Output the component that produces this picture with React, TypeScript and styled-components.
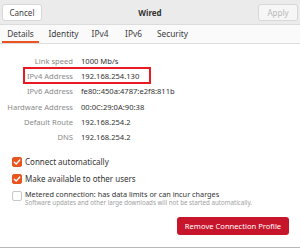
import React from "react";
import styled, { createGlobalStyle } from "styled-components";

const Global = createGlobalStyle`
  html, body { margin: 0; padding: 0; background: #ffffff; }
  body { font-family: "Noto Sans", "DejaVu Sans", sans-serif; }
  * { box-sizing: border-box; }
`;

const Window = styled.div`
  position: relative;
  width: 300px;
  height: 248px;
  display: flex;
  flex-direction: column;
  background: #ffffff;
  overflow: hidden;
  border-bottom: 1px solid #b8b8b8;
`;

const Header = styled.div`
  height: 25px;
  flex: none;
  display: grid;
  grid-template-columns: 1fr auto 1fr;
  align-items: center;
  padding: 0 2px;
  background: #ebebeb;
  border-bottom: 1px solid #dcdcdc;
`;

const HeadButton = styled.button<{ $disabled?: boolean }>`
  width: 40px;
  height: 17px;
  padding: 0;
  border: 1px solid #d8d8d8;
  border-radius: 3px;
  background: ${(p) => (p.$disabled ? "#f6f6f6" : "#ffffff")};
  color: ${(p) => (p.$disabled ? "#b8b8b8" : "#3d3d3d")};
  font-family: inherit;
  font-size: 8px;
  justify-self: ${(p) => (p.$disabled ? "end" : "start")};
`;

const Title = styled.div`
  font-size: 8px;
  font-weight: 700;
  color: #333333;
`;

const Tabs = styled.div`
  height: 19px;
  flex: none;
  display: flex;
  padding-left: 2px;
  background: #fafafa;
  border-bottom: 1px solid #dedede;
`;

const Tab = styled.div<{ $active?: boolean; $w: number }>`
  width: ${(p) => p.$w}px;
  display: flex;
  align-items: center;
  justify-content: center;
  padding-top: 1px;
  font-size: 8.3px;
  color: #3d3d3d;
  border-bottom: 2px solid ${(p) => (p.$active ? "#e95420" : "transparent")};
`;

const Content = styled.div`
  flex: 1;
  display: flex;
  flex-direction: column;
  padding-top: 9px;
`;

const Details = styled.div`
  display: grid;
  grid-template-columns: 73px auto;
  column-gap: 8px;
  grid-auto-rows: 15.3px;
  align-items: center;
  font-size: 7.6px;
`;

const Label = styled.div`
  text-align: right;
  color: #8a8a8a;
  white-space: nowrap;
`;

const Value = styled.div`
  color: #333333;
  white-space: nowrap;
`;

const RedBox = styled.div`
  position: absolute;
  left: 23px;
  top: 67px;
  width: 128px;
  height: 17px;
  border: 2px solid #ea1a22;
  pointer-events: none;
`;

const Checks = styled.div`
  display: flex;
  flex-direction: column;
  gap: 7px;
  padding-left: 12px;
  margin-top: 12px;
`;

const CheckRow = styled.div<{ $shift?: number }>`
  display: flex;
  align-items: flex-start;
  gap: 3px;
  margin-top: ${(p) => p.$shift ?? 0}px;
`;

const Box = styled.div<{ $checked?: boolean }>`
  width: 10px;
  height: 10px;
  flex: none;
  border-radius: 2px;
  margin-top: ${(p) => (p.$checked ? "0" : "2px")};
  background: ${(p) => (p.$checked ? "#e95420" : "#ffffff")};
  border: 1px solid ${(p) => (p.$checked ? "#e95420" : "#c8c8c8")};
  display: flex;
  align-items: center;
  justify-content: center;
`;

const CheckText = styled.div<{ $size?: number }>`
  display: flex;
  flex-direction: column;
  font-size: ${(p) => p.$size ?? 8}px;
  color: #333333;
  line-height: 10px;
  white-space: nowrap;
`;

const SubText = styled.div`
  font-size: 6.2px;
  color: #a0a0a0;
  line-height: 8px;
`;

const Footer = styled.div`
  display: flex;
  justify-content: flex-end;
  padding-right: 11px;
  margin-top: auto;
  margin-bottom: 12px;
`;

const DangerButton = styled.button`
  width: 112px;
  height: 18px;
  border: none;
  border-radius: 3px;
  background: #c7162b;
  color: #ffffff;
  font-family: inherit;
  font-size: 7.6px;
  padding: 0;
`;

const Tick = () => (
  <svg width="8" height="8" viewBox="0 0 8 8">
    <path d="M1.3 4.2 L3.2 6 L6.8 2" stroke="#fff" strokeWidth="1.4" fill="none" strokeLinecap="round" strokeLinejoin="round" />
  </svg>
);

const rows: [string, string][] = [
  ["Link speed", "1000 Mb/s"],
  ["IPv4 Address", "192.168.254.130"],
  ["IPv6 Address", "fe80::450a:4787:e2f8:811b"],
  ["Hardware Address", "00:0C:29:0A:90:38"],
  ["Default Route", "192.168.254.2"],
  ["DNS", "192.168.254.2"],
];

const tabs: [string, number][] = [
  ["Details", 37],
  ["Identity", 49],
  ["IPv4", 24],
  ["IPv6", 43],
  ["Security", 35],
];

export default function App() {
  return (
    <>
      <Global />
      <Window>
        <Header>
          <HeadButton>Cancel</HeadButton>
          <Title>Wired</Title>
          <HeadButton $disabled>Apply</HeadButton>
        </Header>
        <Tabs>
          {tabs.map(([t, w], i) => (
            <Tab key={t} $w={w} $active={i === 0}>
              {t}
            </Tab>
          ))}
        </Tabs>
        <Content>
          <Details>
            {rows.map(([l, v]) => (
              <React.Fragment key={l}>
                <Label>{l}</Label>
                <Value>{v}</Value>
              </React.Fragment>
            ))}
          </Details>
          <Checks>
            <CheckRow>
              <Box $checked><Tick /></Box>
              <CheckText>Connect automatically</CheckText>
            </CheckRow>
            <CheckRow>
              <Box $checked><Tick /></Box>
              <CheckText>Make available to other users</CheckText>
            </CheckRow>
            <CheckRow $shift={-2}>
              <Box />
              <CheckText $size={7.3}>
                Metered connection: has data limits or can incur charges
                <SubText>Software updates and other large downloads will not be started automatically.</SubText>
              </CheckText>
            </CheckRow>
          </Checks>
          <Footer>
            <DangerButton>Remove Connection Profile</DangerButton>
          </Footer>
        </Content>
        <RedBox />
      </Window>
    </>
  );
}
